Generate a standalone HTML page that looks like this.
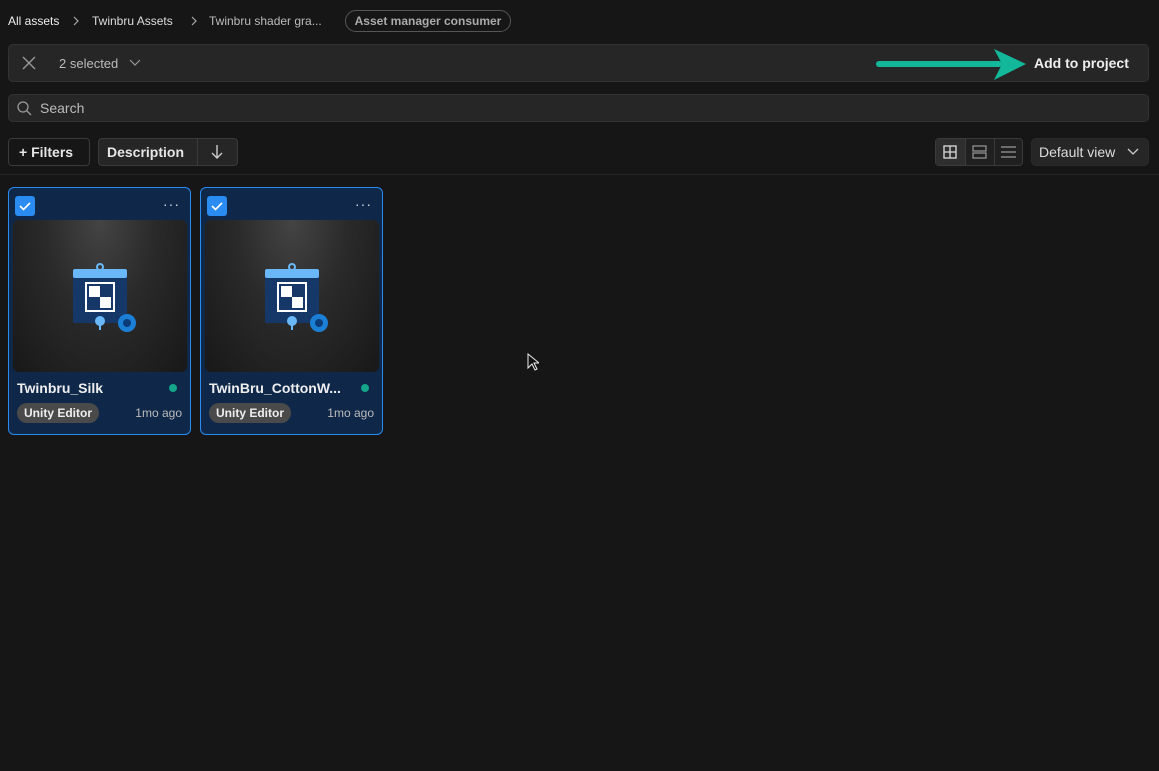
<!DOCTYPE html>
<html><head><style>
*{box-sizing:border-box;margin:0;padding:0}
body{width:1159px;height:771px;background:#161616;font-family:"Liberation Sans",sans-serif;color:#e6e6e6;position:relative;overflow:hidden;font-size:13px}
.abs{position:absolute}
.bar{background:#262626;border:1px solid #333;border-radius:5px}
.card{position:absolute;top:187px;width:183px;height:248px;background:#0f284a;border:1px solid #2a8cf0;border-radius:6px}
.thumb{position:absolute;left:4px;top:32px;width:174px;height:152px;border-radius:6px;background:radial-gradient(ellipse at 50% 0%,#444 0%,#2a2a2a 45%,#181818 100%)}
.chk{position:absolute;left:6px;top:8px;width:20px;height:20px;background:#2a8cf0;border-radius:3px}
.dots{position:absolute;right:10px;top:8px;color:#ddd;font-size:14px;letter-spacing:1px}
.name{position:absolute;left:8px;top:192px;font-size:14px;font-weight:bold;color:#eee}
.dot{position:absolute;right:13px;top:196px;width:8px;height:8px;border-radius:50%;background:#14a58a}
.tag{position:absolute;left:8px;top:215px;height:20px;padding:0 7px;border-radius:10px;background:#4a4a4a;font-size:12px;font-weight:bold;line-height:20px;color:#eee}
.ago{position:absolute;right:8px;top:218px;font-size:12px;color:#bbb}
</style></head><body>
<div class="abs" style="left:8px;top:14px;font-size:12px;color:#eee">All assets</div>
<svg class="abs" style="left:72px;top:16px" width="8" height="10"><path d="M2 1l4 4-4 4" fill="none" stroke="#aaa" stroke-width="1.2"/></svg>
<div class="abs" style="left:92px;top:14px;font-size:12px;color:#ddd">Twinbru Assets</div>
<svg class="abs" style="left:190px;top:16px" width="8" height="10"><path d="M2 1l4 4-4 4" fill="none" stroke="#aaa" stroke-width="1.2"/></svg>
<div class="abs" style="left:209px;top:14px;font-size:12px;color:#bbb">Twinbru shader gra...</div>
<div class="abs" style="left:345px;top:10px;height:22px;width:166px;border:1px solid #555;border-radius:11px;font-size:12px;color:#aaa;line-height:20px;text-align:center;font-weight:bold">Asset manager consumer</div>

<div class="abs bar" style="left:8px;top:44px;width:1141px;height:38px"></div>
<svg class="abs" style="left:22px;top:56px" width="14" height="14"><path d="M1 1L13 13M13 1L1 13" stroke="#999" stroke-width="1.4"/></svg>
<div class="abs" style="left:59px;top:56px;color:#bbb">2 selected</div>
<svg class="abs" style="left:129px;top:59px" width="12" height="8"><path d="M1 1l5 5 5-5" fill="none" stroke="#999" stroke-width="1.2"/></svg>
<svg class="abs" style="left:874px;top:46px" width="156" height="36"><path d="M5 18H125" stroke="#13b89a" stroke-width="6" stroke-linecap="round"/><path d="M120 3L152 18L120 34L128 18Z" fill="#13b89a"/></svg>
<div class="abs" style="left:1034px;top:55px;font-weight:bold;font-size:14px;color:#eee">Add to project</div>

<div class="abs bar" style="left:8px;top:94px;width:1141px;height:28px"></div>
<svg class="abs" style="left:16px;top:100px" width="16" height="16"><circle cx="7" cy="7" r="5" fill="none" stroke="#999" stroke-width="1.3"/><path d="M11 11l4 4" stroke="#999" stroke-width="1.3"/></svg>
<div class="abs" style="left:40px;top:100px;font-size:14px;color:#bbb">Search</div>

<div class="abs" style="left:8px;top:138px;width:82px;height:28px;border:1px solid #3a3a3a;border-radius:4px;font-weight:bold;font-size:14px;line-height:26px;padding-left:10px">+ Filters</div>
<div class="abs" style="left:98px;top:138px;width:140px;height:28px;background:#262626;border:1px solid #3a3a3a;border-radius:4px"></div>
<div class="abs" style="left:107px;top:144px;font-weight:bold;font-size:14px">Description</div>
<div class="abs" style="left:197px;top:138px;width:1px;height:28px;background:#3a3a3a"></div>
<svg class="abs" style="left:210px;top:144px" width="14" height="16"><path d="M7 1v13M2 9l5 5 5-5" fill="none" stroke="#ccc" stroke-width="1.4"/></svg>

<div class="abs" style="left:935px;top:138px;width:88px;height:28px;border:1px solid #3a3a3a;border-radius:4px;background:#202020"></div>
<div class="abs" style="left:936px;top:139px;width:29px;height:26px;background:#2e2e2e"></div>
<div class="abs" style="left:965px;top:139px;width:1px;height:26px;background:#3a3a3a"></div>
<div class="abs" style="left:994px;top:139px;width:1px;height:26px;background:#3a3a3a"></div>
<svg class="abs" style="left:943px;top:145px" width="14" height="14"><rect x="1" y="1" width="12" height="12" fill="none" stroke="#ddd" stroke-width="1.3"/><path d="M7 1v12M1 7h12" stroke="#ddd" stroke-width="1.3"/></svg>
<svg class="abs" style="left:972px;top:145px" width="15" height="14"><rect x="1" y="1" width="13" height="5" fill="none" stroke="#999" stroke-width="1.2"/><rect x="1" y="8" width="13" height="5" fill="none" stroke="#999" stroke-width="1.2"/></svg>
<svg class="abs" style="left:1001px;top:145px" width="15" height="14"><path d="M0 2h15M0 7h15M0 12h15" stroke="#999" stroke-width="1.2"/></svg>
<div class="abs bar" style="left:1031px;top:138px;width:118px;height:28px;border-color:#2a2a2a"></div>
<div class="abs" style="left:1039px;top:144px;font-size:14px;color:#ddd">Default view</div>
<svg class="abs" style="left:1127px;top:148px" width="12" height="8"><path d="M1 1l5 5 5-5" fill="none" stroke="#ccc" stroke-width="1.3"/></svg>
<div class="abs" style="left:0;top:174px;width:1159px;height:1px;background:#262626"></div>

<div class="card" style="left:8px">
<div class="chk"><svg width="20" height="20"><path d="M5 10l3.5 3.5L15 7" fill="none" stroke="#fff" stroke-width="1.6"/></svg></div>
<div class="dots">···</div>
<div class="thumb"><svg style="position:absolute;left:50px;top:40px" width="76" height="74"><circle cx="37" cy="7" r="3" fill="none" stroke="#6ab8f7" stroke-width="2"/><rect x="10" y="9" width="54" height="54" rx="2" fill="#163868"/><rect x="10" y="9" width="54" height="9" rx="2" fill="#6ab8f7"/><rect x="23" y="23" width="28" height="28" fill="none" stroke="#fff" stroke-width="2"/><rect x="26" y="26" width="11" height="11" fill="#fff"/><rect x="37" y="37" width="11" height="11" fill="#fff"/><circle cx="37" cy="61" r="5" fill="#6ab8f7"/><path d="M37 64v6" stroke="#6ab8f7" stroke-width="2"/><circle cx="64" cy="63" r="9" fill="#1b7fd6"/><circle cx="64" cy="63" r="4" fill="#0b3c78"/></svg></div>
<div class="name">Twinbru_Silk</div><div class="dot"></div>
<div class="tag">Unity Editor</div><div class="ago">1mo ago</div>
</div>
<div class="card" style="left:200px">
<div class="chk"><svg width="20" height="20"><path d="M5 10l3.5 3.5L15 7" fill="none" stroke="#fff" stroke-width="1.6"/></svg></div>
<div class="dots">···</div>
<div class="thumb"><svg style="position:absolute;left:50px;top:40px" width="76" height="74"><circle cx="37" cy="7" r="3" fill="none" stroke="#6ab8f7" stroke-width="2"/><rect x="10" y="9" width="54" height="54" rx="2" fill="#163868"/><rect x="10" y="9" width="54" height="9" rx="2" fill="#6ab8f7"/><rect x="23" y="23" width="28" height="28" fill="none" stroke="#fff" stroke-width="2"/><rect x="26" y="26" width="11" height="11" fill="#fff"/><rect x="37" y="37" width="11" height="11" fill="#fff"/><circle cx="37" cy="61" r="5" fill="#6ab8f7"/><path d="M37 64v6" stroke="#6ab8f7" stroke-width="2"/><circle cx="64" cy="63" r="9" fill="#1b7fd6"/><circle cx="64" cy="63" r="4" fill="#0b3c78"/></svg></div>
<div class="name">TwinBru_CottonW...</div><div class="dot"></div>
<div class="tag">Unity Editor</div><div class="ago">1mo ago</div>
</div>
<svg class="abs" style="left:527px;top:353px" width="12" height="18"><path d="M1 1v14l4-4 3 6 2-1-3-6h5z" fill="#111" stroke="#eee" stroke-width="1"/></svg>
</body></html>
